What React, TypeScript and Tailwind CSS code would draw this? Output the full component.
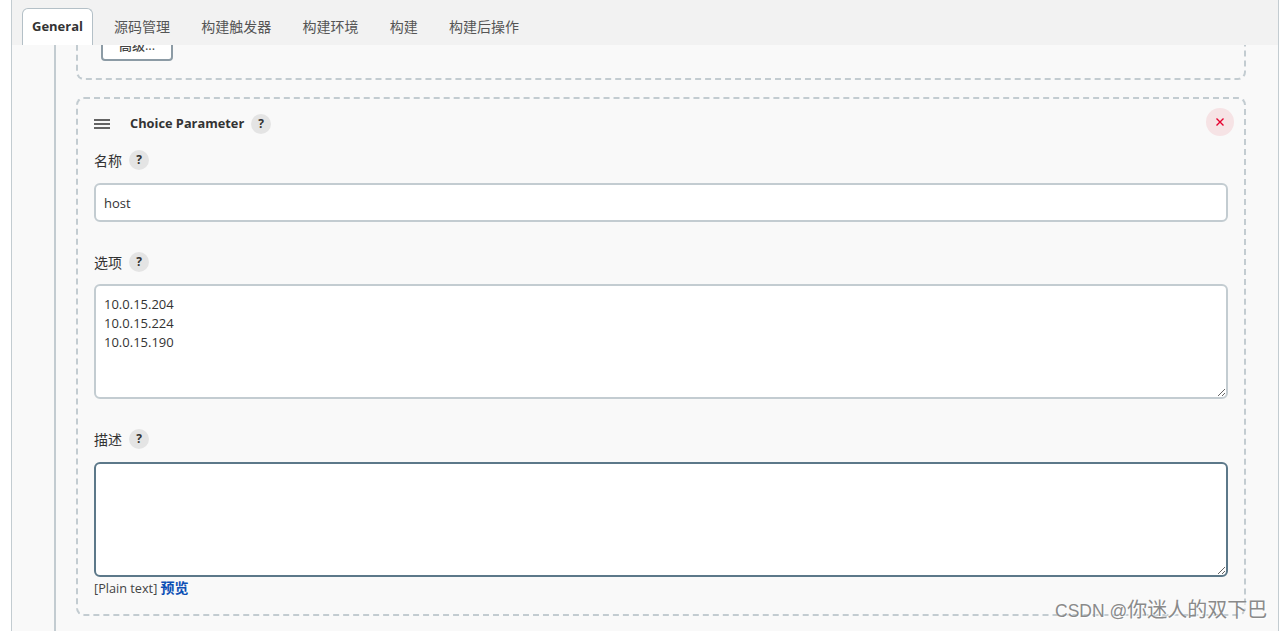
import React from 'react';

const font = { fontFamily: '"Open Sans", "Noto Sans CJK SC", sans-serif' };

const tabs = ['源码管理', '构建触发器', '构建环境', '构建', '构建后操作'];

const Help = () => (
  <span className="ml-[7px] flex h-5 w-5 items-center justify-center rounded-full bg-[#e4e4e4] text-xs font-bold leading-none text-[#333]">
    ?
  </span>
);

const Label = ({ children }: { children: React.ReactNode }) => (
  <div className="flex h-5 items-center text-[14px] text-[#333]">
    {children}
    <Help />
  </div>
);

export default function App() {
  return (
    <div className="relative flex h-[631px] w-full overflow-hidden bg-white text-[#333]" style={font}>
      <div className="ml-[11px] mr-[2px] flex min-w-0 flex-1 flex-col overflow-hidden border-x border-[#c3ccd1] bg-[#f9f9f9]">
        {/* Tab bar */}
        <div className="relative z-10 flex h-[45px] shrink-0 items-end bg-[#f2f2f2] pl-[10px]">
          <div className="flex h-[37px] w-[71px] items-center justify-center rounded-t-md border border-b-0 border-[#b4c0c7] bg-white text-[13px] font-bold text-[#333]">
            General
          </div>
          <div className="ml-[21px] flex gap-[31.25px]">
            {tabs.map((t) => (
              <div key={t} className="flex h-[37px] items-center text-[14px] text-[#555]">
                {t}
              </div>
            ))}
          </div>
        </div>

        {/* Section body */}
        <div className="ml-[42px] flex-1 border-l-2 border-[#c3ccd1] pl-[20px] pr-[32px]">
          <div className="-mt-[15px] flex h-[50px] flex-col rounded-b-lg border-2 border-t-0 border-dashed border-[#c3ccd1] pl-[23px]">
            <button className="h-[31px] w-[72px] rounded border-2 border-[#8c9ba5] bg-white text-[13px] font-medium text-[#444]">
              高级...
            </button>
          </div>

          <div className="mt-[17px] h-[519px] rounded-lg border-2 border-dashed border-[#c3ccd1] px-[16px]">
            <div className="flex h-[50px] items-center">
              <svg width="16" height="10" viewBox="0 0 16 10" className="mb-[1px] mr-[20px] shrink-0 text-[#333]">
                <path d="M0 1h16M0 5h16M0 9h16" stroke="currentColor" strokeWidth="1.4" fill="none" />
              </svg>
              <span className="text-[12.8px] font-bold text-[#333]">Choice Parameter</span>
              <Help />
              <button className="ml-auto -mr-[6px] mb-1 flex h-[28px] w-[28px] items-center justify-center rounded-full bg-[#f6e3e5]">
                <svg width="10" height="10" viewBox="0 0 10 10">
                  <path d="M1.5 1.5l7 7M8.5 1.5l-7 7" stroke="#e6002e" strokeWidth="1.4" fill="none" />
                </svg>
              </button>
            </div>

            <div className="mt-[1px]">
              <Label>名称</Label>
              <input
                readOnly
                value="host"
                className="mt-[13px] block h-[39px] w-full rounded-md border-2 border-[#c3ccd1] bg-white px-2 text-[13px] text-[#333] outline-none"
              />
            </div>

            <div className="mt-[30px]">
              <Label>选项</Label>
              <textarea
                readOnly
                value={'10.0.15.204\n10.0.15.224\n10.0.15.190'}
                className="mt-[12px] block h-[115px] w-full rounded-md border-2 border-[#c3ccd1] bg-white px-2 py-[9px] text-[13px] leading-[19px] text-[#333] outline-none"
              />
            </div>

            <div className="mt-[30px]">
              <Label>描述</Label>
              <textarea
                readOnly
                className="mt-[13px] block h-[115px] w-full rounded-md border-2 border-[#5c7889] bg-white px-2 py-[8px] text-[13px] outline-none"
              />
              <div className="mt-[2px] text-[12.7px] leading-[18px] text-[#444]">
                [Plain text] <a className="text-[14px] font-semibold text-[#0b4fb5]">预览</a>
              </div>
            </div>
          </div>
        </div>
      </div>

      {/* Watermark */}
      <div className="absolute left-[1055px] top-[597px] text-[17.5px] leading-[26px] text-[#8a8a8a] [font-family:'Liberation_Sans','Noto_Sans_CJK_SC',sans-serif] [text-shadow:1px_1px_1px_#fff]">
        CSDN @<span className="text-[20px]">你迷人的双下巴</span>
      </div>
    </div>
  );
}
